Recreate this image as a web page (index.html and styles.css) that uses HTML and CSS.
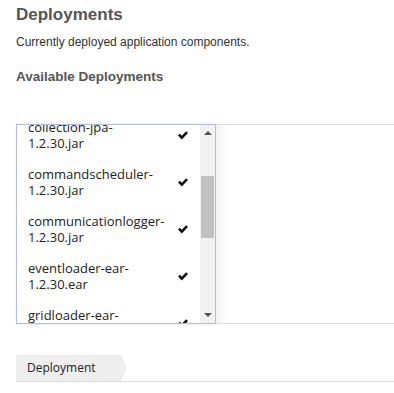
FILE: index.html
```html
<!DOCTYPE html>
<html lang="en">
<head>
    <meta charset="UTF-8">
    <title>Deployments</title>
    <link rel="stylesheet" href="styles.css">
</head>
<body>
    <h1 class="page-title">Deployments</h1>
    <p class="page-desc">Currently deployed application components.</p>
    <h2 class="section-title">Available Deployments</h2>

    <div class="browser">
        <div class="deploy-list">
            <div class="list-view">
                <ul class="items">
                    <li class="item"><span>collection-jpa-<br>1.2.30.jar</span><svg class="check" viewBox="0 0 10 9"><path d="M0 4.6 L1.9 2.8 L3.8 4.7 L8.1 0.2 L10 2.1 L3.8 8.6 Z"/></svg></li>
                    <li class="item"><span>commandscheduler-<br>1.2.30.jar</span><svg class="check" viewBox="0 0 10 9"><path d="M0 4.6 L1.9 2.8 L3.8 4.7 L8.1 0.2 L10 2.1 L3.8 8.6 Z"/></svg></li>
                    <li class="item"><span>communicationlogger-<br>1.2.30.jar</span><svg class="check" viewBox="0 0 10 9"><path d="M0 4.6 L1.9 2.8 L3.8 4.7 L8.1 0.2 L10 2.1 L3.8 8.6 Z"/></svg></li>
                    <li class="item"><span>eventloader-ear-<br>1.2.30.ear</span><svg class="check" viewBox="0 0 10 9"><path d="M0 4.6 L1.9 2.8 L3.8 4.7 L8.1 0.2 L10 2.1 L3.8 8.6 Z"/></svg></li>
                    <li class="item"><span>gridloader-ear-<br>1.2.30.ear</span><svg class="check" viewBox="0 0 10 9"><path d="M0 4.6 L1.9 2.8 L3.8 4.7 L8.1 0.2 L10 2.1 L3.8 8.6 Z"/></svg></li>
                </ul>
            </div>
            <div class="scrollbar">
                <span class="arrow up"></span>
                <div class="track"><div class="thumb"></div></div>
                <span class="arrow down"></span>
            </div>
        </div>
        <div class="detail-pane"></div>
    </div>

    <div class="breadcrumb">
        <span class="crumb">Deployment</span>
    </div>
</body>
</html>
```

FILE: styles.css
```css
body {
    margin: 0;
    padding: 0 0 0 16px;
    font-family: "Liberation Sans", Arial, sans-serif;
    color: #333;
    background: #fff;
}

.page-title {
    margin: 0;
    padding-top: 5px;
    font-size: 17px;
    line-height: 20px;
    font-weight: bold;
    color: #555;
}

.page-desc {
    margin: 10px 0 0;
    font-size: 12px;
    line-height: 14px;
    color: #333;
}

.section-title {
    margin: 20px 0 0;
    font-size: 13.5px;
    line-height: 16px;
    font-weight: bold;
    color: #555;
}

/* list + detail */
.browser {
    display: flex;
    margin-top: 39px;
    height: 200px;
}

.deploy-list {
    display: flex;
    width: 198px;
    border: 1px solid #b3bdd8;
    box-shadow: 1px 0 3px rgba(160, 170, 200, 0.35);
}

.list-view {
    flex: 1;
    overflow: hidden;
}

.items {
    list-style: none;
    margin: -14px 0 0;
    padding: 0;
    font-family: "Open Sans", sans-serif;
    font-size: 13px;
    line-height: 16px;
    color: #222;
}

.item {
    display: flex;
    align-items: center;
    justify-content: space-between;
    padding: 7.5px 12px 7.5px 11px;
}

.check {
    width: 10px;
    height: 9px;
    fill: #111;
    margin-top: 1px;
}

.scrollbar {
    width: 15px;
    display: flex;
    flex-direction: column;
    align-items: center;
    background: #f1f1f1;
}

.arrow {
    width: 0;
    height: 0;
    border-left: 4px solid transparent;
    border-right: 4px solid transparent;
    margin: 6px 0;
}

.arrow.up {
    border-bottom: 4px solid #505050;
}

.arrow.down {
    border-top: 4px solid #505050;
}

.track {
    flex: 1;
    width: 100%;
    padding-top: 35px;
}

.thumb {
    width: 13px;
    height: 62px;
    margin: 0 auto;
    background: #c1c1c1;
}

.detail-pane {
    flex: 1;
    border-top: 1px solid #dcdcdc;
    border-bottom: 1px solid #dcdcdc;
    background: linear-gradient(to right, #f2f2f2, #fff 14px);
}

/* breadcrumb */
.breadcrumb {
    margin-top: 31px;
    border-bottom: 1px solid #dcdcdc;
    height: 26px;
}

.crumb {
    position: relative;
    display: inline-block;
    height: 26px;
    line-height: 26px;
    padding: 0 25px 0 11px;
    background: #eee;
    font-family: "Open Sans", sans-serif;
    font-size: 12px;
    color: #222;
}

.crumb::after {
    content: "";
    position: absolute;
    right: -6px;
    top: 0;
    border-top: 13px solid transparent;
    border-bottom: 13px solid transparent;
    border-left: 6px solid #eee;
}
```
